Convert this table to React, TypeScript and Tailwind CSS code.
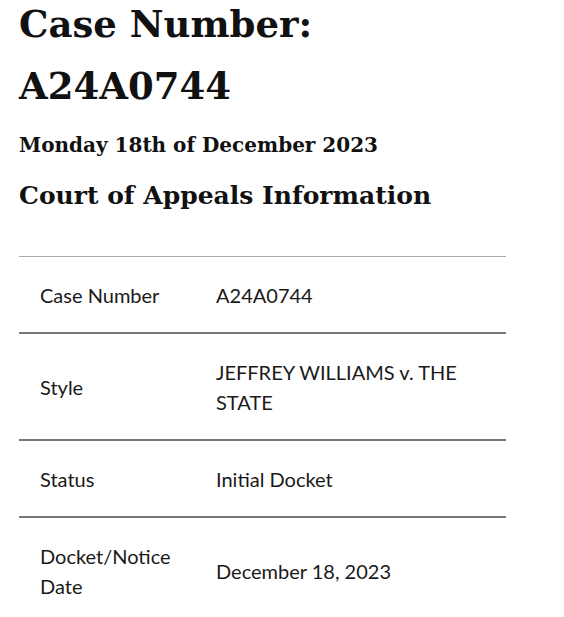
const rows = [
  { label: 'Case Number', value: 'A24A0744' },
  { label: 'Style', value: 'JEFFREY WILLIAMS v. THE STATE' },
  { label: 'Status', value: 'Initial Docket' },
  { label: 'Docket/Notice Date', value: 'December 18, 2023' },
]

export default function App() {
  return (
    <div className="bg-white text-black min-h-screen px-[19px]">
      <h1 className="font-['DejaVu_Serif',serif] font-bold text-[37px] leading-[62px] -mt-[7px] text-[#111]">
        Case Number:
        <br />
        A24A0744
      </h1>
      <h2 className="font-['DejaVu_Serif',serif] font-bold text-[20px] leading-[32px] mt-[12px] text-[#111]">
        Monday 18th of December 2023
      </h2>
      <h3 className="font-['DejaVu_Serif',serif] font-bold text-[25px] leading-[40px] mt-[15px] text-[#111]">
        Court of Appeals Information
      </h3>

      <table className="w-[487px] mt-[40px] border-collapse font-['Lato',sans-serif] text-[20px] leading-[30px] text-[#1a1a1a]">
        <tbody>
          {rows.map((r, i) => (
            <tr
              key={r.label}
              className={i === 0 ? 'border-t border-[#aaa]' : 'border-t-2 border-[#777]'}
            >
              <td className="w-[176px] pl-[21px] pr-[10px] pt-[23px] pb-[22px] align-middle">{r.label}</td>
              <td className="pl-[21px] pr-[22px] pt-[23px] pb-[22px] align-middle">{r.value}</td>
            </tr>
          ))}
        </tbody>
      </table>
    </div>
  )
}
